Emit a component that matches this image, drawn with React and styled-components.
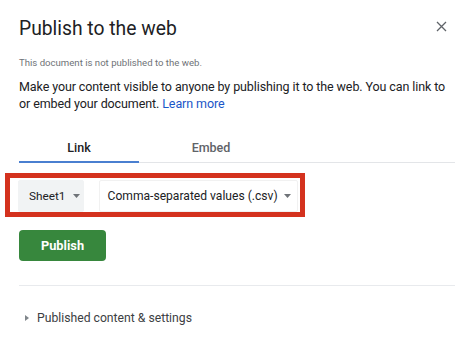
import styled, { createGlobalStyle } from 'styled-components';

const GlobalStyle = createGlobalStyle`
  body {
    margin: 0;
    background: #fff;
    font-family: Roboto, "Liberation Sans", Arial, sans-serif;
    color: #202124;
  }
`;

function CaretDown() {
  return (
    <svg width="7" height="4" viewBox="0 0 7 4">
      <path d="M0 0h7L3.5 4z" fill="#6f7378" />
    </svg>
  );
}

export default function App() {
  return (
    <>
      <GlobalStyle />
      <Dialog>
        <Header>
          <Title>Publish to the web</Title>
          <CloseButton aria-label="Close">
            <svg width="11" height="11" viewBox="0 0 11 11">
              <path d="M1 1l9 9M10 1L1 10" stroke="#5f6368" strokeWidth="1.3" />
            </svg>
          </CloseButton>
        </Header>
        <Status>This document is not published to the web.</Status>
        <Description>
          Make your content visible to anyone by publishing it to the web. You can link to
          or embed your document. <LearnMore href="#">Learn more</LearnMore>
        </Description>

        <TabBar>
          <Tab active width={120}>Link</Tab>
          <Tab width={144}>Embed</Tab>
        </TabBar>

        <Highlight>
          <Select variant="filled">
            Sheet1
            <CaretDown />
          </Select>
          <Select variant="outlined">
            Comma-separated values (.csv)
            <CaretDown />
          </Select>
        </Highlight>

        <PublishButton>Publish</PublishButton>

        <Divider />

        <Disclosure>
          <svg width="4" height="6" viewBox="0 0 4 6">
            <path d="M0 0l4 3L0 6z" fill="#80868b" />
          </svg>
          Published content &amp; settings
        </Disclosure>
      </Dialog>
    </>
  );
}

const Dialog = styled.div`
  padding: 17px 19px 0 19px;
  display: flex;
  flex-direction: column;
  align-items: flex-start;
`;

const Header = styled.div`
  display: flex;
  align-items: center;
  justify-content: space-between;
  align-self: stretch;
`;

const Title = styled.h1`
  margin: 0;
  font-size: 19.3px;
  line-height: 24px;
  font-weight: 400;
  color: #202124;
`;

const CloseButton = styled.button`
  border: 0;
  background: none;
  padding: 0;
  margin: 0 8px 0 0;
  width: 11px;
  height: 11px;
  display: flex;
  position: relative;
  top: -3px;
`;

const Status = styled.div`
  margin-top: 14px;
  font-size: 9.6px;
  line-height: 16px;
  color: #6f7378;
`;

const Description = styled.p`
  margin: 8px 0 0;
  font-size: 12.5px;
  letter-spacing: -0.1px;
  line-height: 16.5px;
  color: #202124;
`;

const LearnMore = styled.a`
  color: #1a56c8;
  text-decoration: none;
`;

const TabBar = styled.div`
  margin-top: 21px;
  display: flex;
  align-self: stretch;
  border-bottom: 1px solid #e3e5e8;
`;

const Tab = styled.div`
  width: ${({ width }) => width}px;
  height: 30px;
  box-sizing: border-box;
  display: flex;
  align-items: center;
  justify-content: center;
  font-size: 12.5px;
  font-weight: 500;
  color: ${({ active }) => (active ? '#202124' : '#5f6368')};
  border-bottom: 2px solid ${({ active }) => (active ? '#4a7fd0' : 'transparent')};
  margin-bottom: -1px;
`;

const Highlight = styled.div`
  margin: 10px 0 0 -14px;
  border: 5px solid #d4321e;
  padding: 2px 2px 0 8px;
  display: flex;
  gap: 15px;
`;

const Select = styled.div`
  height: 32px;
  box-sizing: border-box;
  display: flex;
  align-items: center;
  gap: ${({ variant }) => (variant === 'filled' ? 7 : 6)}px;
  font-size: ${({ variant }) => (variant === 'filled' ? 11.8 : 12.1)}px;
  color: #202124;
  padding: 0 ${({ variant }) => (variant === 'filled' ? 3 : 6)}px 0
    ${({ variant }) => (variant === 'filled' ? 10 : 8)}px;
  background: ${({ variant }) => (variant === 'filled' ? '#f1f3f4' : '#fff')};
  border: 1px solid ${({ variant }) => (variant === 'filled' ? '#f1f3f4' : '#f1f1f1')};
  border-radius: 2px;
`;

const PublishButton = styled.button`
  margin-top: 13px;
  width: 87px;
  height: 31px;
  border: 0;
  border-radius: 4px;
  background: #37873d;
  color: #fff;
  font-family: Roboto, "Liberation Sans", Arial, sans-serif;
  font-size: 12.8px;
  font-weight: 700;
`;

const Divider = styled.hr`
  margin: 24px 0 0;
  align-self: stretch;
  border: 0;
  border-top: 1px solid #e8eaed;
`;

const Disclosure = styled.div`
  margin: 22px 0 0 6px;
  display: flex;
  align-items: center;
  gap: 8px;
  font-size: 12.2px;
  line-height: 20px;
  color: #3c4043;
`;
